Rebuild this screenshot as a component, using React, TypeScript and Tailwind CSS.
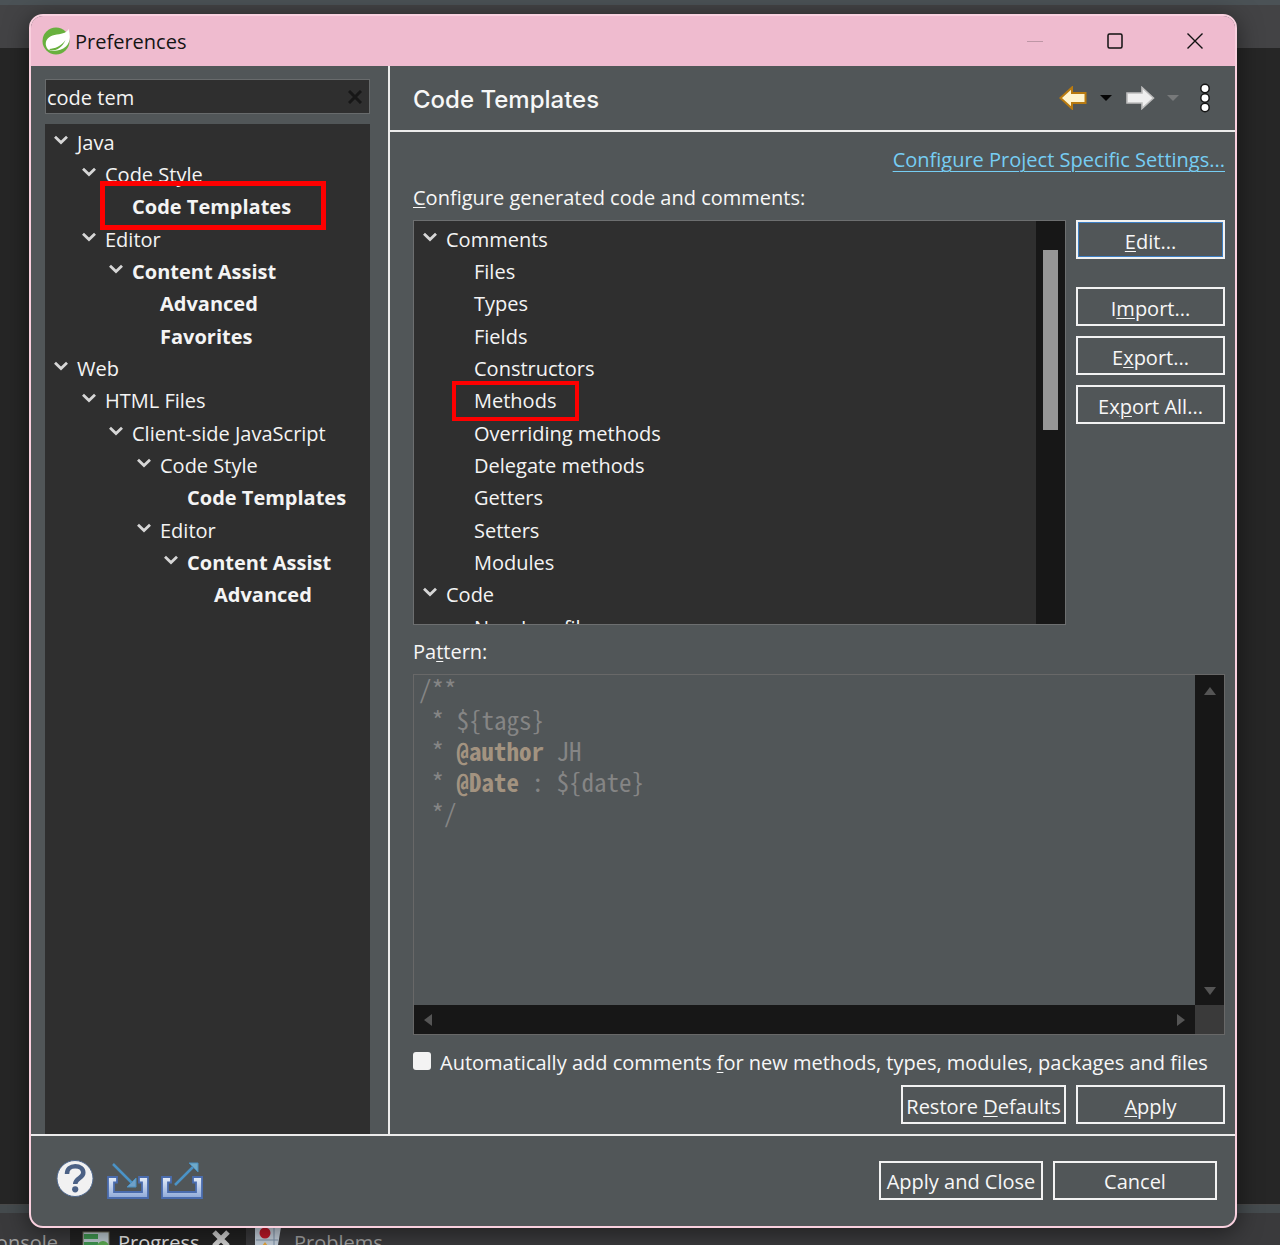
import React from "react";

type Node = { label: string; level: number; open?: boolean; bold?: boolean; mark?: "wide" | "small" };

const prefTree: Node[] = [
  { label: "Java", level: 0, open: true },
  { label: "Code Style", level: 1, open: true },
  { label: "Code Templates", level: 2, bold: true, mark: "wide" },
  { label: "Editor", level: 1, open: true },
  { label: "Content Assist", level: 2, open: true, bold: true },
  { label: "Advanced", level: 3, bold: true },
  { label: "Favorites", level: 3, bold: true },
  { label: "Web", level: 0, open: true },
  { label: "HTML Files", level: 1, open: true },
  { label: "Client-side JavaScript", level: 2, open: true },
  { label: "Code Style", level: 3, open: true },
  { label: "Code Templates", level: 4, bold: true },
  { label: "Editor", level: 3, open: true },
  { label: "Content Assist", level: 4, open: true, bold: true },
  { label: "Advanced", level: 5, bold: true },
];

const templateTree: Node[] = [
  { label: "Comments", level: 0, open: true },
  { label: "Files", level: 1 },
  { label: "Types", level: 1 },
  { label: "Fields", level: 1 },
  { label: "Constructors", level: 1 },
  { label: "Methods", level: 1, mark: "small" },
  { label: "Overriding methods", level: 1 },
  { label: "Delegate methods", level: 1 },
  { label: "Getters", level: 1 },
  { label: "Setters", level: 1 },
  { label: "Modules", level: 1 },
  { label: "Code", level: 0, open: true },
  { label: "New Java files", level: 1 },
];

const indent = ["pl-[9px]", "pl-[37px]", "pl-[64px]", "pl-[92px]", "pl-[119px]", "pl-[146px]"];

const marks = {
  wide: "-top-[10px] -left-8 h-[49px] w-[226px] border-[5px]",
  small: "-top-1 -left-[22px] h-10 w-[127px] border-4",
};

function Tree({ nodes, label }: { nodes: Node[]; label: string }) {
  return (
    <ul role="tree" aria-label={label}>
      {nodes.map((n, i) => (
        <li
          key={i}
          role="treeitem"
          aria-level={n.level + 1}
          aria-expanded={n.open}
          className={`flex h-8 items-center whitespace-nowrap leading-8 text-[#f4f4f4] nth-[3n]:mb-px ${indent[n.level]} ${n.bold ? "font-bold" : ""}`}
        >
          <span className="w-[23px] shrink-0">
            {n.open && (
              <svg viewBox="0 0 14 10" className="mb-1.5 h-[10px] w-[14px]" fill="none" stroke="#d6d6d6" strokeWidth="2.8">
                <path d="M1 1.8 7 7.6 13 1.8" />
              </svg>
            )}
          </span>
          <span className="relative">
            {n.label}
            {n.mark && <span aria-hidden className={`absolute border-[#fe0000] ${marks[n.mark]}`} />}
          </span>
        </li>
      ))}
    </ul>
  );
}

function Key({ children }: { children: string }) {
  return <u className="underline decoration-1 underline-offset-2">{children}</u>;
}

function Tag({ children }: { children: string }) {
  return <b className="text-[#a39380]">{children}</b>;
}

function Button({ children, className = "" }: { children: React.ReactNode; className?: string }) {
  return (
    <button
      type="button"
      className={`flex h-[39px] items-center justify-center whitespace-nowrap border-2 border-[#f2f2f2] bg-[#515658] pt-1 text-[#f7f7f7] ${className}`}
    >
      <span>{children}</span>
    </button>
  );
}

function SpringLogo() {
  return (
    <svg viewBox="0 0 28 28" className="size-7">
      <circle cx="14" cy="14" r="13.5" fill="#68b03e" />
      <path d="M26.5 2C24 7 19 6.500 12.500 8 6 9.500 2.800 14 4 18.500c.5 2 1.500 3.500 3 4.500 5 1.800 12 .8 17-3.500 4.500-4.500 4.500-11 2.500-17.500Z" fill="#fff" />
      <path d="M7 22c6-.5 12-2.500 16.500-9-3 7.500-8.500 10.500-14.500 10.500Z" fill="#68b03e" />
    </svg>
  );
}

function Tray({ out }: { out?: boolean }) {
  return (
    <svg viewBox="0 0 42 38" className="h-[38px] w-[42px]">
      <defs>
        <linearGradient id={out ? "trayOut" : "trayIn"} x1="0" y1="0" x2="0" y2="1">
          <stop offset="0" stopColor="#e6edf8" />
          <stop offset="1" stopColor="#8ea9d8" />
        </linearGradient>
      </defs>
      <path
        d="M1 16h9v5.500H7V31h28v-9.500h-3V16h9v21H1Z"
        fill={out ? "url(#trayOut)" : "url(#trayIn)"}
        stroke="#4a6cae"
        strokeWidth="1.800"
      />
      {out ? (
        <>
          <path d="M14 24 33 5" stroke="#4b93c6" strokeWidth="2.500" />
          <path d="M28 2h9v9Z" fill="#6fa9c8" stroke="#4b8fbf" />
        </>
      ) : (
        <>
          <path d="M6 3l19 19" stroke="#4b93c6" strokeWidth="2.500" />
          <path d="M29 17v9h-9Z" fill="#6fa0c8" stroke="#4b8fbf" />
        </>
      )}
    </svg>
  );
}

function Workbench() {
  return (
    <div className="absolute inset-0 flex flex-col bg-[#262626]">
      <div className="h-[5px] bg-[#4b5256]" />
      <div className="h-[43px] bg-[#434345]" />
      <div className="flex-1" />
      <div className="h-[9px] border-t border-[#4a4a4a] bg-[#454b4e]" />
      <div className="flex h-[33px] items-start overflow-hidden bg-[#3a3a3c] pt-[14px] text-[#a0a0a0]">
        <span className="flex w-[70px] justify-end self-stretch pr-3 leading-8">Console</span>
        <span className="-mt-[14px] flex w-[176px] self-stretch bg-[#222] pt-[14px] pl-3 leading-8 text-[#e6e6e6]">
          <svg viewBox="0 0 28 20" className="mt-1 mr-2 h-5 w-7 shrink-0">
            <rect x="1" y="1" width="26" height="18" fill="#b9c7cc" stroke="#6d6d55" />
            <path d="M2 3h14v5H2zM2 11h14v5H2z" fill="#3f9650" />
            <circle cx="21" cy="16" r="6" fill="#5aa850" />
          </svg>
          Progress
          <svg viewBox="0 0 18 18" className="mt-[3px] ml-3 size-[18px] shrink-0" stroke="#cfcfcf" strokeWidth="5">
            <path d="m2 2 14 14M16 2 2 16" />
          </svg>
        </span>
        <svg viewBox="0 0 28 24" className="ml-2 h-6 w-7">
          <path d="M1 0h26l-4 24H1Z" fill="#c5d0dc" />
          <path d="M2 13h22M20 0v24" stroke="#7f92a8" />
          <circle cx="11" cy="6" r="5.500" fill="#c3182a" />
          <path d="m11 15 6 8H5Z" fill="#e3a53c" />
        </svg>
        <span className="ml-3 leading-8">Problems</span>
      </div>
    </div>
  );
}

export default function App() {
  return (
    <div className="relative flex min-h-screen flex-col overflow-hidden bg-[#262626] font-['Open_Sans','Noto_Sans_CJK_KR',sans-serif] text-[20px] leading-7">
      <Workbench />
      <main className="relative mt-[14px] mr-[43px] mb-[18px] ml-[29px] flex flex-1 flex-col overflow-hidden rounded-[14px] border-2 border-[#f9d0de] bg-[#515658] shadow-[0_4px_24px_rgba(0,0,0,0.5)]">
        <header className="flex h-[50px] items-center bg-[#efbbcf] pl-[11px] text-[#141414]">
          <SpringLogo />
          <h1 className="ml-[5px] flex-1 pt-0.5">Preferences</h1>
          <button type="button" aria-label="Minimize" className="flex h-full w-20 items-center justify-center">
            <svg viewBox="0 0 16 16" className="size-4" stroke="#bd96a5"><path d="M0 8.500h16" /></svg>
          </button>
          <button type="button" aria-label="Maximize" className="flex h-full w-20 items-center justify-center">
            <svg viewBox="0 0 16 16" className="size-4" fill="none" stroke="#111" strokeWidth="1.500"><rect x="1" y="1" width="14" height="14" rx="1.500" /></svg>
          </button>
          <button type="button" aria-label="Close" className="flex h-full w-20 items-center justify-center">
            <svg viewBox="0 0 16 16" className="size-4" fill="none" stroke="#111" strokeWidth="1.400"><path d="m.5.5 15 15M15.500.5l-15 15" /></svg>
          </button>
        </header>

        <div className="flex flex-1">
          <aside className="flex w-[359px] shrink-0 flex-col border-r-2 border-[#ececec] pt-[13px] pr-[18px] pl-[14px]">
            <div className="flex h-[35px] items-center border border-[#686b6c] bg-[#2f2f2f] pr-[7px]">
              <input aria-label="Filter" defaultValue="code tem" className="min-w-0 flex-1 bg-transparent pt-0.5 pl-px text-[#f4f4f4] outline-none" />
              <button type="button" aria-label="Clear filter">
                <svg viewBox="0 0 14 14" className="size-[14px]" stroke="#171717" strokeWidth="3"><path d="m1 1 12 12M13 1 1 13" /></svg>
              </button>
            </div>
            <div className="mt-[10px] flex-1 bg-[#2f2f2f] pt-[3px]">
              <Tree nodes={prefTree} label="Preference pages" />
            </div>
          </aside>

          <section className="flex min-w-0 flex-1 flex-col">
            <div className="flex h-[66px] items-center border-b-2 border-[#ececec] pr-6 pl-[23px]">
              <h2 className="flex-1 pt-1 font-['Inter','Open_Sans',sans-serif] text-[24px] font-medium text-[#f7f7f7]">Code Templates</h2>
              <button type="button" aria-label="Back">
                <svg viewBox="0 0 28 24" className="h-6 w-7"><path d="M1.500 12 13 1.500V7h13.500v10H13v5.500Z" fill="#fff5cf" stroke="#b87a10" strokeWidth="2" /></svg>
              </button>
              <button type="button" aria-label="Back history" className="ml-[13px]">
                <svg viewBox="0 0 12 6" className="h-1.5 w-3"><path d="M0 0h12L6 6Z" fill="#060606" /></svg>
              </button>
              <button type="button" aria-label="Forward" className="ml-[13px]">
                <svg viewBox="0 0 30 24" className="h-6 w-[30px]"><path d="M28.500 12 17 1.500V7H2v10h15v5.500Z" fill="#efefef" stroke="#bdbdbd" strokeWidth="1.600" /></svg>
              </button>
              <button type="button" aria-label="Forward history" className="ml-3">
                <svg viewBox="0 0 12 6" className="h-1.5 w-3"><path d="M0 0h12L6 6Z" fill="#77797a" /></svg>
              </button>
              <button type="button" aria-label="Menu" className="ml-5">
                <svg viewBox="0 0 12 30" className="h-[30px] w-3" fill="#fff" stroke="#161616" strokeWidth="1.500">
                  <circle cx="6" cy="5.500" r="4.200" /><circle cx="6" cy="15" r="4.200" /><circle cx="6" cy="24.500" r="4.200" />
                </svg>
              </button>
            </div>

            <div className="flex flex-1 flex-col pr-[10px] pb-[10px] pl-[23px] text-[#f7f7f7]">
              <a href="#project" className="mt-3 self-end leading-8 text-[#76cdf3] underline decoration-1 underline-offset-4">
                Configure Project Specific Settings...
              </a>
              <p className="mt-[6px] leading-8"><Key>C</Key>onfigure generated code and comments:</p>
              <div className="mt-[6px] flex gap-[10px]">
                <div className="flex h-[405px] flex-1 overflow-hidden border border-[#6d6f70] bg-[#2f2f2f]">
                  <div className="flex-1 pt-[3px]">
                    <Tree nodes={templateTree} label="Templates" />
                  </div>
                  <div className="w-[29px] bg-[#171717] px-[7px] pt-[29px]">
                    <div className="h-[180px] bg-[#969696]" />
                  </div>
                </div>
                <div className="flex w-[149px] flex-col gap-[10px]">
                  <Button className="mb-[18px] shadow-[inset_0_0_0_1px_#3d7fc4]"><Key>E</Key>dit...</Button>
                  <Button>I<Key>m</Key>port...</Button>
                  <Button>E<Key>x</Key>port...</Button>
                  <Button>Ex<Key>p</Key>ort All...</Button>
                </div>
              </div>

              <p id="pattern" className="mt-[11px] leading-8">Pa<Key>t</Key>tern:</p>
              <div className="mt-[6px] grid min-h-[361px] flex-1 grid-cols-[1fr_29px] grid-rows-[1fr_29px] border border-[#686868]">
                <div
                  role="textbox"
                  aria-multiline="true"
                  aria-readonly="true"
                  aria-labelledby="pattern"
                  className="-mt-0.5 pl-[5px] font-['Noto_Sans_Mono_CJK_KR','Liberation_Mono',monospace] text-[25px] leading-[31px] whitespace-pre text-[#858585]"
                >
                  <div>/**</div>
                  <div>{" * ${tags}"}</div>
                  <div>{" * "}<Tag>@author</Tag>{" JH"}</div>
                  <div>{" * "}<Tag>@Date</Tag>{" : ${date}"}</div>
                  <div>{" */"}</div>
                </div>
                <div className="flex flex-col items-center justify-between bg-[#171717] pt-3 pb-[10px] text-[#555]">
                  <svg viewBox="0 0 12 8" className="h-2 w-3" fill="currentColor"><path d="M6 0 12 8H0Z" /></svg>
                  <svg viewBox="0 0 12 8" className="h-2 w-3" fill="currentColor"><path d="M6 8 12 0H0Z" /></svg>
                </div>
                <div className="flex items-center justify-between bg-[#171717] px-[10px] text-[#555]">
                  <svg viewBox="0 0 8 12" className="h-3 w-2" fill="currentColor"><path d="M0 6 8 0v12Z" /></svg>
                  <svg viewBox="0 0 8 12" className="h-3 w-2" fill="currentColor"><path d="M8 6 0 0v12Z" /></svg>
                </div>
                <div className="bg-[#3a3a3a]" />
              </div>

              <label className="mt-3 flex items-center gap-[9px] leading-8 whitespace-nowrap">
                <input type="checkbox" className="mb-1 size-[18px] appearance-none rounded-[3px] bg-[#f3f3f3]" />
                <span>Automatically add comments <Key>f</Key>or new methods, types, modules, packages and files</span>
              </label>
              <div className="mt-[6px] flex justify-end gap-[10px]">
                <Button className="w-[165px]">Restore <Key>D</Key>efaults</Button>
                <Button className="w-[149px]"><Key>A</Key>pply</Button>
              </div>
            </div>
          </section>
        </div>

        <footer className="flex h-[92px] items-center border-t-2 border-[#ececec] pr-[18px] pb-0.5 pl-6">
          <button type="button" aria-label="Help">
            <svg viewBox="0 0 40 40" className="size-10" fill="none">
              <circle cx="20" cy="18.500" r="18" fill="#f1f1f1" stroke="#4d668c" strokeWidth="1" />
              <path d="M12 14c0-5 3.500-7.700 8.200-7.700s8.100 2.700 8.100 6.500c0 5.400-8.100 5.200-8.100 11.200" stroke="#4b6185" strokeWidth="4.500" />
              <circle cx="20.200" cy="29.300" r="3.100" fill="#4b6185" />
            </svg>
          </button>
          <button type="button" aria-label="Import preferences" className="ml-3"><Tray /></button>
          <button type="button" aria-label="Export preferences" className="ml-3"><Tray out /></button>
          <div className="ml-auto flex gap-[10px]">
            <Button className="w-[164px]">Apply and Close</Button>
            <Button className="w-[164px]">Cancel</Button>
          </div>
        </footer>
      </main>
    </div>
  );
}
